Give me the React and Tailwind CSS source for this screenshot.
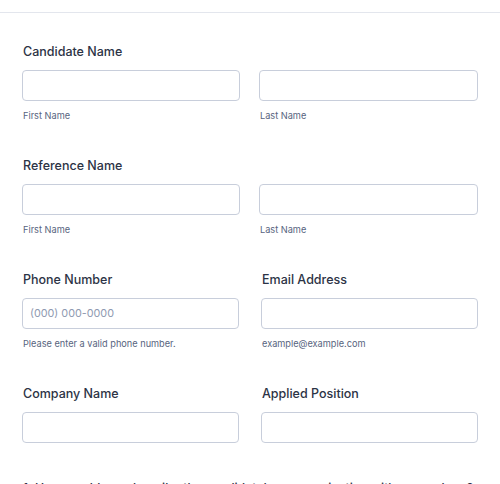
function Field({ label, sub, placeholder }) {
  return (
    <div className="flex flex-col">
      {label !== undefined && (
        <label className="mt-px h-5 pl-px text-[12.5px] leading-5 font-medium text-[#2c3345]">{label}</label>
      )}
      <input
        type="text"
        placeholder={placeholder}
        className="mt-[8px] h-[31px] w-full rounded-[4px] border border-[#c8cedb] bg-white px-[7px] text-[10.8px] text-[#2c3345] placeholder:text-[#8f9ab1] outline-none"
      />
      {sub && <p className="mt-[8px] h-[14px] pl-px text-[9.2px] leading-[14px] text-[#57647e]">{sub}</p>}
    </div>
  );
}

function NameRow({ label }) {
  return (
    <section className="h-[114px] px-[22px] pt-[28px]">
      <label className="mt-px block h-5 pl-px text-[12.5px] leading-5 font-medium text-[#2c3345]">{label}</label>
      <div className="grid grid-cols-[218px_219px] gap-x-[19px]">
        <Field sub="First Name" />
        <Field sub="Last Name" />
      </div>
    </section>
  );
}

export default function App() {
  return (
    <div className="h-[484px] w-[500px] overflow-hidden bg-white font-['Inter',sans-serif]">
      <div className="h-[13px] border-b border-[#e3e6ed]" />
      <NameRow label="Candidate Name" />
      <NameRow label="Reference Name" />
      <section className="h-[114px] px-[22px] pt-[28px]">
        <div className="grid grid-cols-[217px_217px] gap-x-[22px]">
          <Field label="Phone Number" placeholder="(000) 000-0000" sub="Please enter a valid phone number." />
          <Field label="Email Address" sub="example@example.com" />
        </div>
      </section>
      <section className="px-[22px] pt-[28px]">
        <div className="grid grid-cols-[217px_217px] gap-x-[22px]">
          <Field label="Company Name" />
          <Field label="Applied Position" />
        </div>
        <p className="mt-[35px] pl-px text-[12.3px] leading-5 font-medium text-[#2c3345] whitespace-nowrap">
          1. How would you describe the candidate's communication with co-workers?
        </p>
      </section>
    </div>
  );
}
